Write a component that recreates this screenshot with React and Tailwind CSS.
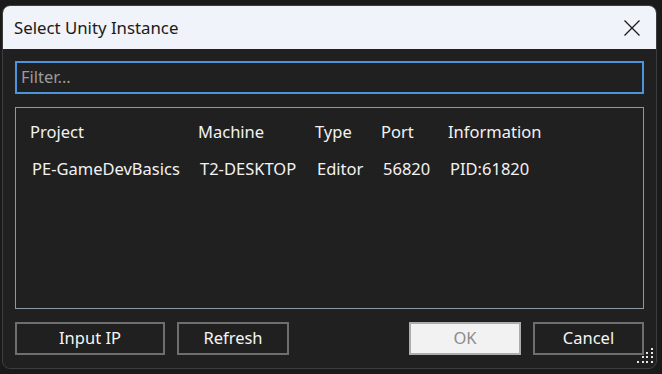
const headers = ["Project", "Machine", "Type", "Port", "Information"]
const rows = [["PE-GameDevBasics", "T2-DESKTOP", "Editor", "56820", "PID:61820"]]
const cols = "grid grid-cols-[168px_117px_66px_67px_1fr]"

function Button({ children, className = "", disabled }) {
  return (
    <button
      className={
        "h-[33px] border-2 text-[16.5px] flex items-center justify-center " +
        (disabled
          ? "bg-[#f2f2f2] border-[#adadad] text-[#8c8c8c] "
          : "bg-[#202020] border-[#6e6e6e] text-[#f5f5f5] ") +
        className
      }
    >
      {children}
    </button>
  )
}

function Grip() {
  const dots = [
    [14, 0],
    [9, 4], [14, 4],
    [5, 8], [9, 8], [14, 8],
    [0, 13], [5, 13], [9, 13], [14, 13],
  ]
  return (
    <svg className="absolute right-[3px] bottom-[5px]" width="16" height="15" viewBox="0 0 16 15">
      {dots.map(([x, y], i) => (
        <rect key={i} x={x} y={y} width="2" height="2" fill="#e6e6e6" />
      ))}
    </svg>
  )
}

export default function App() {
  return (
    <div className="w-[662px] h-[374px] bg-[#1a1a1a] pt-[5px] pl-[2px] overflow-hidden font-['Noto_Sans',sans-serif]">
      <div className="relative w-[655px] h-[364px] rounded-[8px] border border-[#3d3d3d] bg-[#202020] overflow-hidden flex flex-col">
        {/* Title bar */}
        <div className="h-[43px] shrink-0 bg-[#f0f3f9] flex items-center justify-between pl-[11px] pr-[15px]">
          <span className="text-[16.8px] text-[#1a1a1a]">Select Unity Instance</span>
          <svg width="16" height="16" viewBox="0 0 16 16" className="mr-[1px]">
            <path d="M0.5 0.5L15.5 15.5M15.5 0.5L0.5 15.5" stroke="#1a1a1a" strokeWidth="1.3" />
          </svg>
        </div>

        <div className="flex flex-col px-[12px] pt-[12px] gap-[13px]">
          {/* Filter */}
          <div className="h-[33px] border-2 border-[#4c94db] flex items-center pl-[4px]">
            <span className="text-[16.5px] text-[#9b9b9b]">Filter...</span>
          </div>

          {/* List */}
          <div className="h-[202px] border border-[#8c98a4] pl-[14px] pt-[12px]">
            <div className={cols + " text-[16.5px] text-[#f2f2f2] h-[24px] items-center"}>
              {headers.map((h) => (
                <span key={h}>{h}</span>
              ))}
            </div>
            {rows.map((r, i) => (
              <div key={i} className={cols + " text-[16.5px] text-[#f2f2f2] h-[24px] items-center mt-[13px]"}>
                {r.map((c, j) => (
                  <span key={j} className="pl-[2px] whitespace-nowrap">{c}</span>
                ))}
              </div>
            ))}
          </div>

          {/* Buttons */}
          <div className="flex items-center">
            <Button className="w-[150px]">Input IP</Button>
            <Button className="w-[112px] ml-[12px]">Refresh</Button>
            <Button className="w-[112px] ml-auto" disabled>OK</Button>
            <Button className="w-[111px] ml-[12px]">Cancel</Button>
          </div>
        </div>
        <Grip />
      </div>
    </div>
  )
}
